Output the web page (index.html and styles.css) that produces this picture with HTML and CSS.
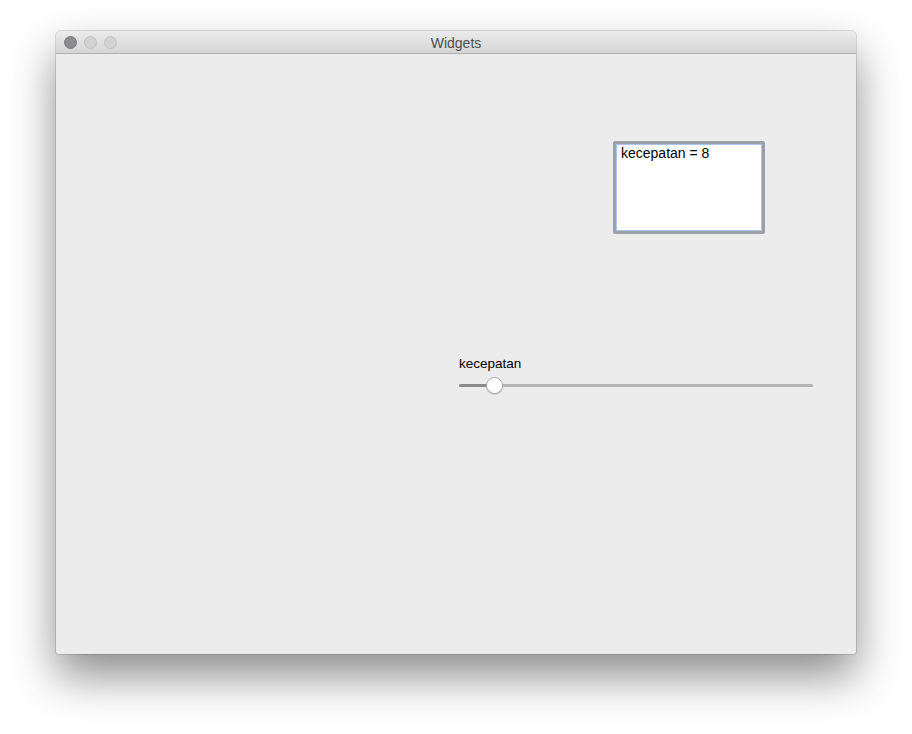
FILE: index.html
```html
<!DOCTYPE html>
<html>

<head>
  <title>Widgets</title>
  <meta name="viewport" content="width=device-width, initial-scale=1">
  <link rel="stylesheet" href="styles.css">
</head>

<body>
  <div class="window">
    <div class="titlebar">
      <div class="lights">
        <span class="light close"></span>
        <span class="light"></span>
        <span class="light"></span>
      </div>
      <div class="title">Widgets</div>
    </div>
    <div class="content">
      <div class="output">kecepatan = 8</div>
      <div class="slider">
        <label class="slider-label">kecepatan</label>
        <div class="track">
          <div class="fill" style="width: 35px"></div>
          <div class="thumb" style="left: 35px"></div>
        </div>
      </div>
    </div>
  </div>
</body>

</html>
```

FILE: styles.css
```css
html {
  font-family: "Liberation Sans", Arial, Helvetica, sans-serif;
}

body {
  margin: 0;
  min-height: 734px;
  padding-top: 31px;
  box-sizing: border-box;
  background-color: #ffffff;
}

.window {
  width: 800px;
  margin-left: 56px;
  border-radius: 5px 5px 3px 3px;
  background-color: #ececec;
  box-shadow: 0 22px 45px rgba(0, 0, 0, .45), 0 0 0 1px rgba(0, 0, 0, .12);
}

.titlebar {
  position: relative;
  height: 23px;
  box-sizing: border-box;
  padding-top: 1px;
  border-radius: 5px 5px 0 0;
  background: linear-gradient(#ebebeb, #d5d5d5);
  border-bottom: 1px solid #b0b0b0;
  display: flex;
  align-items: center;
}

.lights {
  display: flex;
  gap: 7px;
  padding-left: 8px;
}

.light {
  width: 11px;
  height: 11px;
  border-radius: 50%;
  background-color: #d2d2d2;
  border: 1px solid #c2c2c2;
}

.light.close {
  background-color: #8c8c90;
  border-color: #7a7a7e;
}

.title {
  position: absolute;
  left: 0;
  right: 0;
  top: 3px;
  text-align: center;
  font-size: 14px;
  line-height: 18px;
  color: #4d4d4d;
  pointer-events: none;
}

.content {
  height: 600px;
  padding-top: 87px;
  box-sizing: border-box;
}

.output {
  margin-left: 557px;
  width: 152px;
  height: 93px;
  box-sizing: border-box;
  padding: 1px 5px;
  background-color: #fff;
  border: 3px solid #9da1a7;
  border-radius: 2px;
  box-shadow: inset 0 0 0 1px #a8c6f0;
  font-size: 14px;
  line-height: 16px;
  color: #000;
}

.slider {
  margin: 122px 0 0 403px;
  width: 354px;
}

.slider-label {
  display: block;
  font-size: 13.5px;
  line-height: 16px;
  color: #000;
}

.track {
  position: relative;
  margin-top: 12px;
  height: 3px;
  border-radius: 2px;
  background-color: #b5b5b5;
}

.fill {
  height: 3px;
  border-radius: 2px;
  background-color: #8a8a8a;
}

.thumb {
  position: absolute;
  top: -7px;
  width: 17px;
  height: 17px;
  margin-left: -8px;
  box-sizing: border-box;
  border-radius: 50%;
  background-color: #fff;
  border: 1px solid #a9a9a9;
  box-shadow: 0 1px 1px rgba(0, 0, 0, .15);
}
```
